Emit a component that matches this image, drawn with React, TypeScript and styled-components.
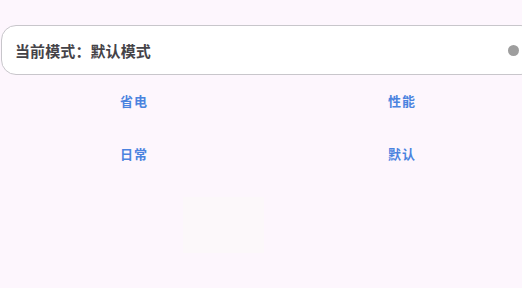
import styled, { createGlobalStyle } from "styled-components";

const GlobalStyle = createGlobalStyle`
    html, body {
        margin: 0;
        padding: 0;
        background: #fdf6fd;
        overflow: hidden;
        font-family: "Noto Sans CJK SC", "Noto Sans", sans-serif;
    }
`;

const Page = styled.div`
    width: 536px;
    height: 288px;
    padding-top: 25px;
    box-sizing: border-box;
    display: flex;
    flex-direction: column;
`;

const ModeCard = styled.div`
    height: 50px;
    margin-left: 1px;
    box-sizing: border-box;
    background: #ffffff;
    border: 1px solid #c8c6cb;
    border-radius: 15px;
    display: flex;
    align-items: center;
    justify-content: space-between;
    padding: 0 16px 0 13px;
`;

const ModeText = styled.span`
    font-size: 15px;
    font-weight: 700;
    color: #454348;
    letter-spacing: 0.1px;
`;

const Dot = styled.span`
    width: 11px;
    height: 11px;
    border-radius: 50%;
    background: #9e9e9e;
`;

const ButtonGrid = styled.div`
    display: grid;
    grid-template-columns: 268px 268px;
    grid-auto-rows: 53px;
    margin-top: -1px;
`;

const ModeButton = styled.button`
    border: none;
    background: transparent;
    font-family: "Noto Sans CJK SC", "Noto Sans", sans-serif;
    font-size: 13px;
    font-weight: 700;
    color: #4b83df;
    letter-spacing: 1px;
    cursor: pointer;
    padding: 0;
`;

const Ghost = styled.div`
    width: 81px;
    height: 56px;
    margin: 17px 0 0 183px;
    background: #fcf8fa;
`;

const modes = ["省电", "性能", "日常", "默认"];

function App(): JSX.Element {
    return (
        <>
            <GlobalStyle />
            <Page>
                <ModeCard>
                    <ModeText>当前模式：默认模式</ModeText>
                    <Dot />
                </ModeCard>
                <ButtonGrid>
                    {modes.map((m) => (
                        <ModeButton key={m}>{m}</ModeButton>
                    ))}
                </ButtonGrid>
                <Ghost />
            </Page>
        </>
    );
}

export default App;
